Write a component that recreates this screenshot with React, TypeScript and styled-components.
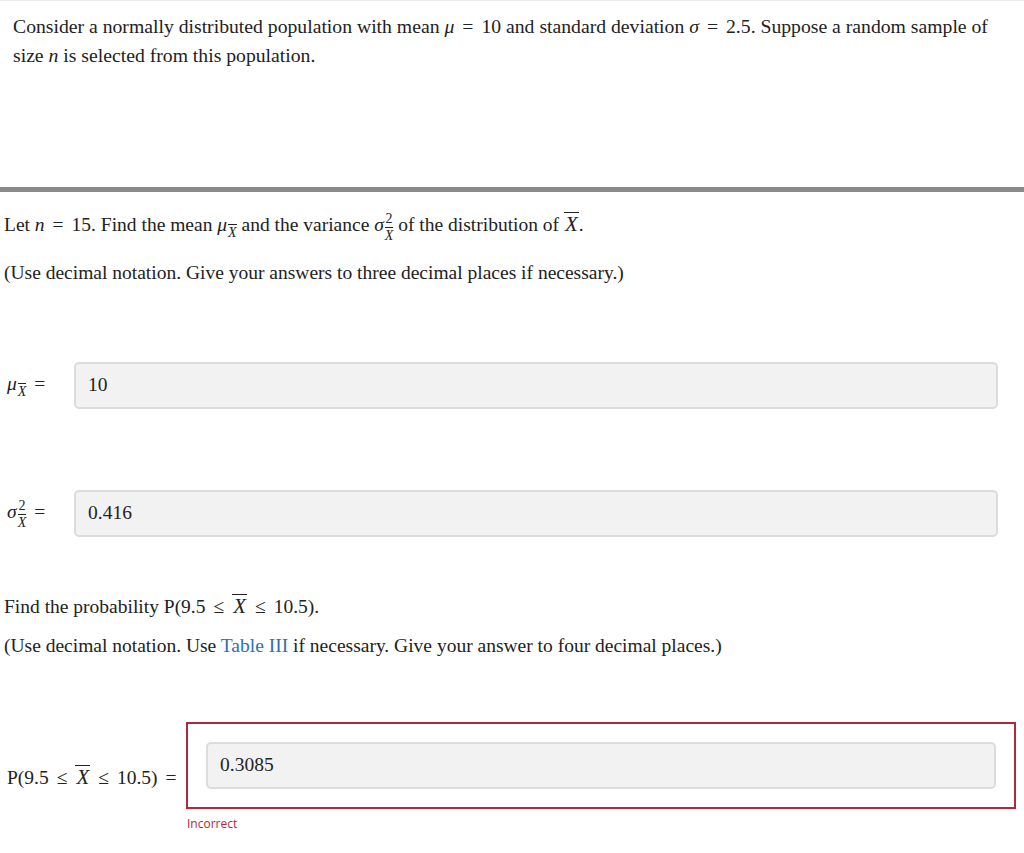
import React from 'react';
import styled, { createGlobalStyle } from 'styled-components';

const GlobalStyle = createGlobalStyle`
  body {
    margin: 0;
    background: #ffffff;
    font-family: "Liberation Serif", "Times New Roman", serif;
    color: #222222;
  }
`;

const Page = styled.div`
  width: 1024px;
  min-height: 853px;
  background: #fff;
`;

const Intro = styled.div`
  height: 187px;
  box-sizing: border-box;
  border-top: 1px solid #ececec;
  padding: 11px 20px 0 13px;
  font-size: 19.7px;
  line-height: 29px;
`;

const Divider = styled.div`
  height: 5px;
  background: #8a8a8a;
`;

const Question = styled.div`
  padding: 18px 26px 0 4px;
`;

const Para = styled.p<{ $gap?: number }>`
  margin: 0 0 ${(p) => p.$gap ?? 15}px 0;
  font-size: 19.5px;
  line-height: 29px;
`;

const Var = styled.i`
  font-style: italic;
  font-family: "Liberation Serif", serif;
`;

const Eq = styled.span`
  padding: 0 8px;
`;

const Rel = styled.span`
  padding: 0 8px;
`;

const Bar = styled.span`
  display: inline-block;
  font-style: italic;
  font-size: 21px;
  border-top: 1px solid #222;
  line-height: 1;
  padding: 1px 1px 0;
`;

const SubBar = styled.span<{ $inStack?: boolean }>`
  display: inline-block;
  font-style: italic;
  font-size: 14px;
  border-top: 1px solid #222;
  line-height: 1;
  padding-top: 1px;
  vertical-align: ${(p) => (p.$inStack ? '0' : '-6px')};
  margin-left: ${(p) => (p.$inStack ? '0' : '1px')};
`;

const Stack = styled.span`
  display: inline-flex;
  flex-direction: column;
  align-items: center;
  vertical-align: 8px;
  margin-left: 1px;
  font-size: 14px;
  line-height: 17px;
`;

const Link = styled.span`
  color: #2f6fb0;
`;

const FieldRow = styled.div<{ $gap?: number }>`
  display: flex;
  align-items: center;
  margin-bottom: ${(p) => p.$gap ?? 0}px;
`;

const Label = styled.div`
  width: 70px;
  padding-left: 3px;
  box-sizing: border-box;
  font-size: 19.5px;
  white-space: nowrap;
`;

const Input = styled.div`
  flex: 1;
  height: 47px;
  box-sizing: border-box;
  background: #f2f2f2;
  border: 2px solid #dcdcdc;
  border-radius: 5px;
  padding: 0 12px 2px;
  display: flex;
  align-items: center;
  font-size: 19.5px;
  color: #222;
`;

const AnswerRow = styled.div`
  display: flex;
  align-items: flex-end;
  margin-right: -18px;
`;

const AnswerLabel = styled.div`
  width: 182px;
  padding-left: 3px;
  padding-bottom: 20px;
  box-sizing: border-box;
  font-size: 19.5px;
  white-space: nowrap;
`;

const WrongBox = styled.div`
  flex: 1;
  border: 2px solid #b0283c;
  padding: 18px;
  display: flex;
`;

const Feedback = styled.div`
  margin-left: 183px;
  margin-top: 6px;
  font-family: "Open Sans", "Noto Sans", sans-serif;
  font-size: 12px;
  color: #b0283c;
`;

const SigmaX = () => (
  <>
    <Var>σ</Var>
    <Stack>
      <span>2</span>
      <SubBar $inStack>X</SubBar>
    </Stack>
  </>
);

const MuX = () => (
  <>
    <Var>μ</Var>
    <SubBar>X</SubBar>
  </>
);

const Range = () => (
  <>
    P(9.5<Rel>≤</Rel>
    <Bar>X</Bar>
    <Rel>≤</Rel>10.5)
  </>
);

const App: React.FC = () => (
  <Page>
    <GlobalStyle />
    <Intro>
      Consider a normally distributed population with mean <Var>μ</Var>
      <Eq>=</Eq>10 and standard deviation <Var>σ</Var>
      <Eq>=</Eq>2.5. Suppose a random sample of size <Var>n</Var> is selected from this population.
    </Intro>
    <Divider />
    <Question>
      <Para>
        Let <Var>n</Var>
        <Eq>=</Eq>15. Find the mean <MuX /> and the variance <SigmaX /> of the distribution of{' '}
        <Bar>X</Bar>.
      </Para>
      <Para $gap={75}>(Use decimal notation. Give your answers to three decimal places if necessary.)</Para>

      <FieldRow $gap={81}>
        <Label>
          <MuX />
          <Eq>=</Eq>
        </Label>
        <Input>10</Input>
      </FieldRow>
      <FieldRow $gap={55}>
        <Label>
          <SigmaX />
          <Eq>=</Eq>
        </Label>
        <Input>0.416</Input>
      </FieldRow>

      <Para $gap={10}>
        Find the probability <Range />.
      </Para>
      <Para $gap={62}>
        (Use decimal notation. Use <Link>Table III</Link> if necessary. Give your answer to four decimal places.)
      </Para>

      <AnswerRow>
        <AnswerLabel>
          <Range />
          <Eq>=</Eq>
        </AnswerLabel>
        <WrongBox>
          <Input>0.3085</Input>
        </WrongBox>
      </AnswerRow>
      <Feedback>Incorrect</Feedback>
    </Question>
  </Page>
);

export default App;
